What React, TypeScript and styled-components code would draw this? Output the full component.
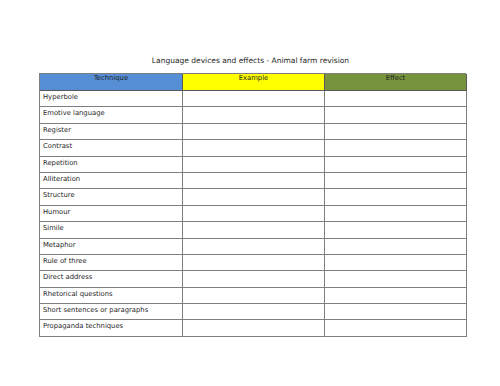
import styled, { createGlobalStyle } from 'styled-components';

const GlobalStyle = createGlobalStyle`
    html, body {
        margin: 0;
        padding: 0;
        background: #ffffff;
    }
    body {
        font-family: "DejaVu Sans", Verdana, sans-serif;
        color: #1f1f1f;
    }
`;

const techniques = [
    'Hyperbole',
    'Emotive language',
    'Register',
    'Contrast',
    'Repetition',
    'Alliteration',
    'Structure',
    'Humour',
    'Simile',
    'Metaphor',
    'Rule of three',
    'Direct address',
    'Rhetorical questions',
    'Short sentences or paragraphs',
    'Propaganda techniques',
];

const headers = [
    { label: 'Technique', color: '#558ed5' },
    { label: 'Example', color: '#ffff00' },
    { label: 'Effect', color: '#77933c' },
];

export default function App() {
    return (
        <Page>
            <GlobalStyle />
            <Title>Language devices and effects - Animal farm revision</Title>
            <Table>
                {headers.map((h) => (
                    <HeadCell key={h.label} bg={h.color}>
                        {h.label}
                    </HeadCell>
                ))}
                {techniques.map((t) => (
                    <Row key={t}>
                        <Cell>{t}</Cell>
                        <Cell />
                        <Cell />
                    </Row>
                ))}
            </Table>
        </Page>
    );
}

const Page = styled.div`
    width: 500px;
    height: 386px;
    display: flex;
    flex-direction: column;
    align-items: flex-start;
    padding: 56px 0 0 39px;
    box-sizing: border-box;
`;

const Title = styled.div`
    width: 427px;
    padding-right: 4px;
    box-sizing: border-box;
    text-align: center;
    font-size: 7.5px;
    line-height: 10px;
    color: #262626;
    margin-bottom: 7px;
`;

const Table = styled.div`
    width: 427px;
    display: grid;
    grid-template-columns: 143px 142px 142px;
    grid-template-rows: 17px;
    grid-auto-rows: 16.4px;
    border-top: 1px solid #7f7f7f;
    border-left: 1px solid #7f7f7f;
    box-sizing: border-box;
`;

const Row = styled.div`
    display: contents;
`;

const HeadCell = styled.div<{ bg: string }>`
    background: ${({ bg }) => bg};
    border-right: 1px solid #595959;
    border-bottom: 1px solid #595959;
    font-size: 6.8px;
    line-height: 8px;
    text-align: center;
    color: #1f1f1f;
    box-sizing: border-box;
`;

const Cell = styled.div`
    border-right: 1px solid #7f7f7f;
    border-bottom: 1px solid #7f7f7f;
    font-size: 6.8px;
    line-height: 8px;
    padding: 2px 0 0 3px;
    color: #262626;
    box-sizing: border-box;
    white-space: nowrap;
`;
